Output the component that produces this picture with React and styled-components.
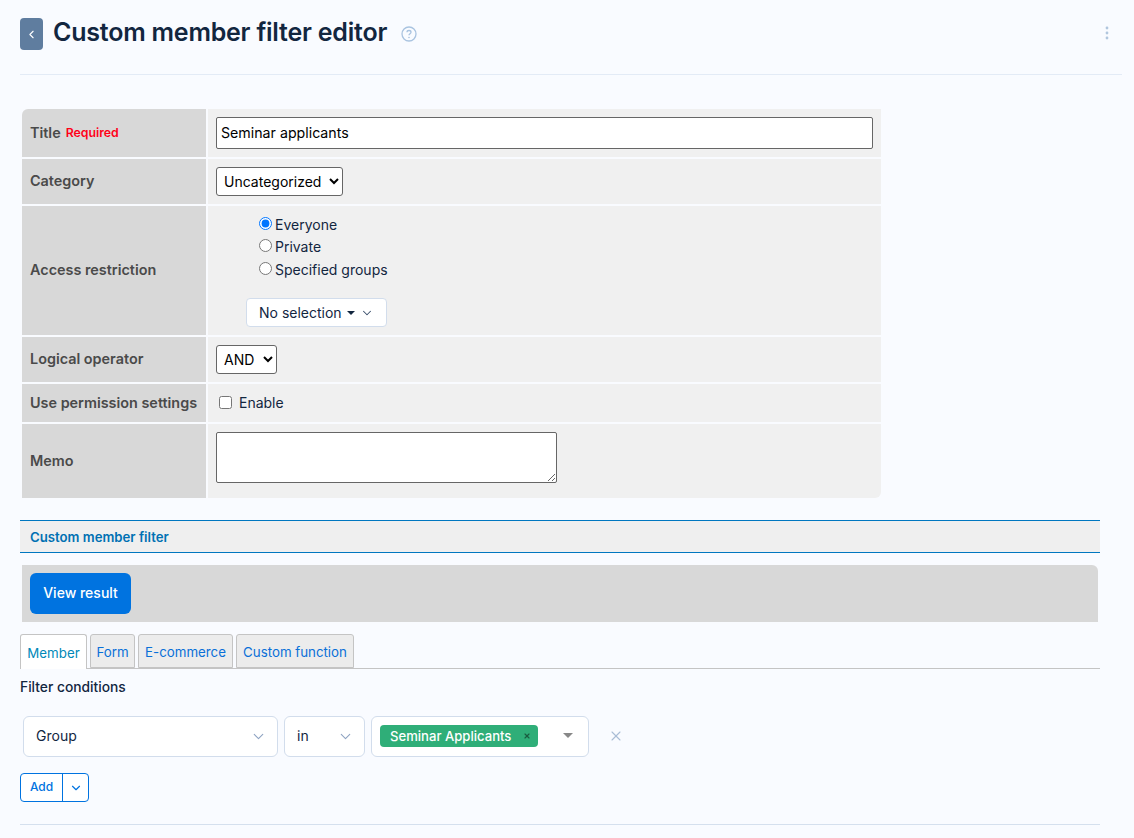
import React from 'react'
import styled, { createGlobalStyle } from 'styled-components'
import { ChevronDown, ChevronLeft, X } from 'lucide-react'

const GlobalStyle = createGlobalStyle`
  html, body {
    margin: 0;
    padding: 0;
    background: #f9fbff;
  }
  body {
    font-family: Inter, "Noto Sans", sans-serif;
    color: #12263f;
    overflow: hidden;
  }
`

const tabs = [
  { name: 'Member', width: 67 },
  { name: 'Form', width: 45 },
  { name: 'E-commerce', width: 95 },
  { name: 'Custom function', width: 118 },
]

const App = () => {
  return (
    <>
      <GlobalStyle />
      <Page>
        <Header>
          <BackButton><ChevronLeft size={13} strokeWidth={2} /></BackButton>
          <Title>Custom member filter editor</Title>
          <HelpIcon viewBox="0 0 16 16">
            <circle cx="8" cy="8" r="7" fill="none" stroke="#a9c3e0" strokeWidth="1.3" />
            <path d="M6 6.3c0-1.1.9-1.8 2-1.8s2 .7 2 1.7c0 1.5-2 1.5-2 3" fill="none" stroke="#a9c3e0" strokeWidth="1.3" />
            <circle cx="8" cy="11.5" r=".8" fill="#a9c3e0" />
          </HelpIcon>
          <MoreIcon viewBox="0 0 4 14">
            <circle cx="2" cy="2" r="1.4" />
            <circle cx="2" cy="7" r="1.4" />
            <circle cx="2" cy="12" r="1.4" />
          </MoreIcon>
        </Header>

        <FormTable>
          <Row $height={48}>
            <Label $first>Title <Required>Required</Required></Label>
            <Cell><TextInput defaultValue="Seminar applicants" /></Cell>
          </Row>
          <Row $height={45}>
            <Label>Category</Label>
            <Cell>
              <NativeSelect defaultValue="Uncategorized" $width={127}>
                <option>Uncategorized</option>
              </NativeSelect>
            </Cell>
          </Row>
          <Row $height={129}>
            <Label>Access restriction</Label>
            <AccessCell>
              <RadioGroup>
                <RadioLabel><Radio name="access" defaultChecked />Everyone</RadioLabel>
                <RadioLabel><Radio name="access" />Private</RadioLabel>
                <RadioLabel><Radio name="access" />Specified groups</RadioLabel>
              </RadioGroup>
              <GroupButton>
                No selection
                <Caret />
                <ChevronDown size={14} strokeWidth={1.8} />
              </GroupButton>
            </AccessCell>
          </Row>
          <Row $height={45}>
            <Label>Logical operator</Label>
            <Cell>
              <NativeSelect defaultValue="AND" $width={61}>
                <option>AND</option>
                <option>OR</option>
              </NativeSelect>
            </Cell>
          </Row>
          <Row $height={38}>
            <Label>Use permission settings</Label>
            <Cell>
              <CheckLabel><Checkbox />Enable</CheckLabel>
            </Cell>
          </Row>
          <Row $height={74}>
            <Label>Memo</Label>
            <MemoCell $last><Memo /></MemoCell>
          </Row>
        </FormTable>

        <SectionHead>Custom member filter</SectionHead>
        <Toolbar>
          <PrimaryButton>View result</PrimaryButton>
        </Toolbar>

        <TabBar>
          {tabs.map((t, i) => (
            <Tab key={t.name} $active={i === 0} $width={t.width}>{t.name}</Tab>
          ))}
        </TabBar>

        <ConditionsTitle>Filter conditions</ConditionsTitle>
        <ConditionRow>
          <SelectBox $width={255}>
            Group
            <SelectChevron size={17} strokeWidth={1.5} />
          </SelectBox>
          <SelectBox $width={81}>
            in
            <SelectChevron size={17} strokeWidth={1.5} />
          </SelectBox>
          <TagBox>
            <Tag>
              Seminar Applicants
              <TagClose size={8} strokeWidth={3.5} />
            </Tag>
            <TagCaret />
          </TagBox>
          <RemoveIcon size={16} strokeWidth={1.6} />
        </ConditionRow>

        <AddGroup>
          <AddButton>Add</AddButton>
          <AddToggle><ChevronDown size={14} strokeWidth={2} /></AddToggle>
        </AddGroup>
        <BottomRule />
      </Page>
    </>
  )
}

const Page = styled.div`
  width: 1134px;
  height: 838px;
  box-sizing: border-box;
  padding-left: 20px;
  overflow: hidden;
`

const Header = styled.header`
  width: 1102px;
  height: 75px;
  box-sizing: border-box;
  padding-top: 18px;
  display: flex;
  align-items: flex-start;
  border-bottom: 1px solid #e3ebf6;
`

const BackButton = styled.button`
  width: 23px;
  height: 32px;
  padding: 0;
  border: none;
  border-radius: 4px;
  background: #5f7d9f;
  color: #fff;
  display: flex;
  align-items: center;
  justify-content: center;
`

const Title = styled.h1`
  margin: -1px 0 0 10px;
  font-size: 25px;
  line-height: 30px;
  font-weight: 600;
  letter-spacing: -0.22px;
  color: #12263f;
  white-space: nowrap;
`

const HelpIcon = styled.svg`
  width: 16px;
  height: 16px;
  margin: 8px 0 0 14px;
`

const MoreIcon = styled.svg`
  width: 4px;
  height: 14px;
  margin: 8px 13px 0 auto;
  fill: #b1c6de;
`

const FormTable = styled.div`
  width: 859px;
  margin: 34px 0 0 2px;
  display: flex;
  flex-direction: column;
  gap: 2px;
`

const Row = styled.div`
  display: grid;
  grid-template-columns: 184px 673px;
  column-gap: 2px;
  height: ${(p) => p.$height}px;
`

const Label = styled.div`
  display: flex;
  align-items: center;
  box-sizing: border-box;
  padding: 0 0 2px 8px;
  background: #d8d8d8;
  color: #4a4a4a;
  font-size: 14.4px;
  font-weight: 600;
  white-space: nowrap;
  border-top-left-radius: ${(p) => (p.$first ? '6px' : '0')};
`

const Required = styled.span`
  color: #ff0018;
  font-size: 12.3px;
  font-weight: 600;
  margin-left: 5px;
`

const Cell = styled.div`
  display: flex;
  align-items: center;
  padding-left: 8px;
  background: #f0f0f0;
  border-bottom-right-radius: ${(p) => (p.$last ? '6px' : '0')};
`

const AccessCell = styled(Cell)`
  flex-direction: column;
  align-items: flex-start;
  padding: 7px 0 0 38px;
  box-sizing: border-box;
`

const MemoCell = styled(Cell)`
  align-items: flex-start;
  padding-top: 8px;
  box-sizing: border-box;
`

const TextInput = styled.input`
  width: 657px;
  height: 32px;
  box-sizing: border-box;
  padding: 0 4px 2px;
  border: 1px solid #666;
  border-radius: 2px;
  background: #fff;
  color: #000;
  font-family: inherit;
  font-size: 14.2px;
  outline: none;
`

const NativeSelect = styled.select`
  width: ${(p) => p.$width}px;
  height: 29px;
  padding: 0 0 1px 3px;
  border: 1px solid #666;
  border-radius: 3px;
  background: #fff;
  color: #000;
  font-family: inherit;
  font-size: 14px;
`

const RadioGroup = styled.div`
  display: flex;
  flex-direction: column;
  padding-left: 13px;
  height: 85px;
`

const RadioLabel = styled.label`
  display: flex;
  align-items: center;
  height: 22.6px;
  font-size: 14px;
  color: #12263f;
`

const Radio = styled.input.attrs({ type: 'radio' })`
  width: 13px;
  height: 13px;
  margin: 0 3px 2px 0;
`

const GroupButton = styled.button`
  width: 141px;
  height: 29px;
  padding: 0 0 1px 12px;
  display: flex;
  align-items: center;
  background: #fff;
  border: 1px solid #d2ddec;
  border-radius: 4px;
  color: #12263f;
  font-family: inherit;
  font-size: 14px;
  svg { margin: 1px 0 0 5px; color: #3b506c; }
`

const Caret = styled.span`
  width: 0;
  height: 0;
  margin: 1px 0 0 5px;
  border-left: 4px solid transparent;
  border-right: 4px solid transparent;
  border-top: 4px solid #12263f;
`

const CheckLabel = styled.label`
  display: flex;
  align-items: center;
  padding-bottom: 2px;
  font-size: 14px;
  color: #12263f;
`

const Checkbox = styled.input.attrs({ type: 'checkbox' })`
  width: 13px;
  height: 13px;
  margin: 0 7px 0 3px;
`

const Memo = styled.textarea`
  width: 341px;
  height: 51px;
  box-sizing: border-box;
  border: 1px solid #666;
  border-radius: 2px;
  background: #fff;
  display: block;
`

const SectionHead = styled.div`
  width: 1080px;
  height: 33px;
  margin-top: 22px;
  box-sizing: border-box;
  padding-left: 10px;
  display: flex;
  align-items: center;
  background: #efefef;
  border-top: 1px solid #0077c0;
  border-bottom: 1px solid #0077c0;
  color: #0071b3;
  font-size: 13.2px;
  font-weight: 600;
`

const Toolbar = styled.div`
  width: 1076px;
  height: 57px;
  margin: 12px 0 0 2px;
  box-sizing: border-box;
  padding: 8px;
  background: #d8d8d8;
  border-top-right-radius: 6px;
`

const PrimaryButton = styled.button`
  width: 101px;
  height: 41px;
  padding: 0 0 2px;
  border: none;
  border-radius: 6px;
  background: #0073e0;
  color: #fff;
  font-family: inherit;
  font-size: 14px;
  font-weight: 500;
`

const TabBar = styled.div`
  width: 1080px;
  height: 35px;
  margin-top: 12px;
  box-sizing: border-box;
  display: flex;
  align-items: flex-end;
  gap: 3px;
  border-bottom: 1px solid #c4c4c4;
`

const Tab = styled.div`
  width: ${(p) => p.$width}px;
  height: ${(p) => (p.$active ? '35px' : '34px')};
  margin-bottom: ${(p) => (p.$active ? '-1px' : '0')};
  box-sizing: border-box;
  padding-top: ${(p) => (p.$active ? '2px' : '1px')};
  display: flex;
  align-items: center;
  justify-content: center;
  white-space: nowrap;
  border: 1px solid #c4c4c4;
  border-bottom: ${(p) => (p.$active ? 'none' : '1px solid #c4c4c4')};
  border-radius: 3px 3px 0 0;
  background: ${(p) => (p.$active ? '#fff' : '#ececec')};
  color: ${(p) => (p.$active ? '#0088b8' : '#0a70d8')};
  font-size: 13.3px;
`

const ConditionsTitle = styled.div`
  margin-top: 10px;
  font-size: 13.8px;
  line-height: 16px;
  font-weight: 500;
  color: #12263f;
`

const ConditionRow = styled.div`
  display: flex;
  align-items: center;
  gap: 6px;
  margin: 21px 0 0 3px;
`

const SelectBox = styled.div`
  width: ${(p) => p.$width}px;
  height: 41px;
  box-sizing: border-box;
  padding: 0 10px 2px 12px;
  display: flex;
  align-items: center;
  justify-content: space-between;
  background: #fff;
  border: 1px solid #d2ddec;
  border-radius: 6px;
  font-size: 14px;
  color: #12263f;
`

const SelectChevron = styled(ChevronDown)`
  color: #8ea3c2;
  margin-top: 2px;
`

const TagBox = styled.div`
  width: 218px;
  height: 41px;
  box-sizing: border-box;
  padding: 0 15px 2px 8px;
  display: flex;
  align-items: center;
  justify-content: space-between;
  background: #fff;
  border: 1px solid #d2ddec;
  border-radius: 6px;
`

const Tag = styled.div`
  width: 158px;
  height: 22px;
  box-sizing: border-box;
  padding: 0 7px 0 10px;
  display: flex;
  align-items: center;
  justify-content: space-between;
  background: #2fae78;
  border-radius: 4px;
  color: #fff;
  font-size: 13.1px;
  font-weight: 500;
  white-space: nowrap;
`

const TagClose = styled(X)`
  color: #1a5c40;
  flex: none;
`

const TagCaret = styled.span`
  width: 0;
  height: 0;
  margin-bottom: 1px;
  border-left: 5px solid transparent;
  border-right: 5px solid transparent;
  border-top: 5px solid #888;
`

const RemoveIcon = styled(X)`
  color: #a9bdd6;
  margin: 0 0 1px 13px;
`

const AddGroup = styled.div`
  width: 69px;
  height: 29px;
  margin-top: 16px;
  box-sizing: border-box;
  display: flex;
  background: #fff;
  border: 1px solid #0073e0;
  border-radius: 4px;
`

const AddButton = styled.button`
  width: 42px;
  padding: 0 0 2px;
  border: none;
  border-right: 1px solid #0073e0;
  background: none;
  color: #0073e0;
  font-family: inherit;
  font-size: 12px;
  font-weight: 500;
`

const AddToggle = styled.button`
  flex: 1;
  padding: 0;
  border: none;
  background: none;
  color: #0073e0;
  display: flex;
  align-items: center;
  justify-content: center;
`

const BottomRule = styled.div`
  width: 1080px;
  margin-top: 22px;
  border-top: 1px solid #d5e0ee;
`

export default App
